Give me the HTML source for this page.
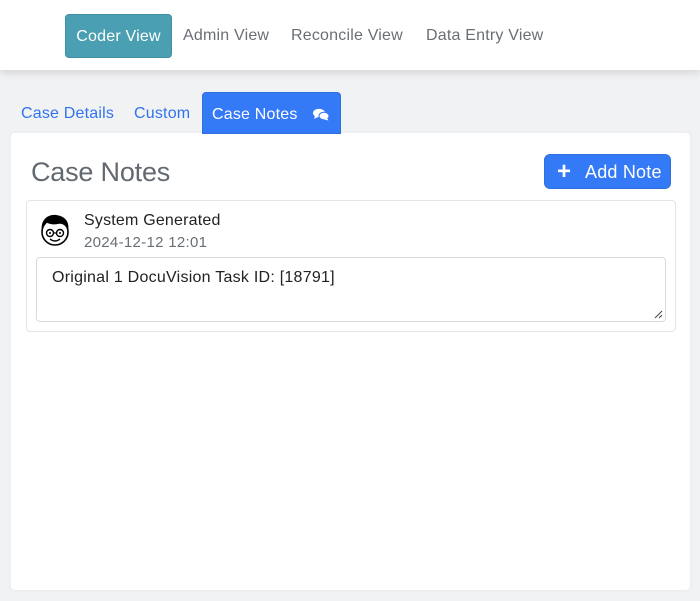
<!DOCTYPE html>
<html><head><style>
*{box-sizing:border-box;margin:0;padding:0}
body{width:700px;height:601px;background:#f1f2f4;font-family:"Liberation Sans",sans-serif;position:relative;overflow:hidden}
.nav{position:absolute;left:0;top:0;width:700px;height:70px;background:#fff;box-shadow:0 3px 8px rgba(0,0,0,.12)}
.nav a{position:absolute;top:13px;height:44px;line-height:44px;font-size:16px;color:#6a6f75;letter-spacing:.2px}
.coder{left:65px;width:107px;background:#4a9fb2;border:1px solid #3f90a3;border-radius:4px;color:#fff!important;text-align:center}
.tab{position:absolute;top:92px;height:42px;line-height:42px;font-size:16px;color:#2f74ee;letter-spacing:.2px}
.act{left:202px;width:139px;background:#3479f5;color:#fff;border-radius:4px 4px 0 0;padding-left:9px;border:1px solid #2f6fe0}
.card{position:absolute;left:11px;top:133px;width:679px;height:457px;background:#fff;border-radius:4px;box-shadow:0 0 4px rgba(0,0,0,.05)}
h1{position:absolute;left:31px;top:157px;font-size:27px;font-weight:normal;color:#636970;letter-spacing:-.2px}
.add{position:absolute;left:544px;top:154px;width:127px;height:35px;background:#3479f5;border:1px solid #2f6fe0;border-radius:6px;color:#fff;font-size:18px;line-height:34px;padding-left:40px;letter-spacing:.2px}
.add span{position:absolute;left:12px;top:0;font-size:24px;font-weight:bold}
.note{position:absolute;left:26px;top:200px;width:650px;height:132px;border:1px solid #e3e4e6;border-radius:4px}
.ta{position:absolute;left:36px;top:257px;width:630px;height:65px;border:1px solid #d9dadc;border-radius:4px;font-size:16px;color:#222;padding:11px 15px;letter-spacing:.25px}
</style></head><body>
<div class="nav">
<a class="coder" style="top:14px">Coder View</a>
<a style="left:183px;top:14px">Admin View</a>
<a style="left:291px;top:14px">Reconcile View</a>
<a style="left:426px;top:14px">Data Entry View</a>
</div>
<div class="tab" style="left:21px;top:93px">Case Details</div>
<div class="tab" style="left:134px;top:93px">Custom</div>
<div class="card"></div>
<div class="tab act"><span style="position:relative;top:1px">Case Notes</span>
<svg style="position:absolute;left:110px;top:15px" width="16" height="13" viewBox="0 0 16 13"><ellipse cx="6" cy="5" rx="6" ry="4.3" fill="#fff"/><path d="M2 8 L1 11 L5 9Z" fill="#fff"/><ellipse cx="11" cy="8" rx="5" ry="3.8" fill="#fff" stroke="#3479f5" stroke-width="1"/><path d="M14 10 L15.5 12.5 L11 11.5Z" fill="#fff"/></svg></div>
<h1>Case Notes</h1>
<div class="add"><span>+</span>Add Note</div>
<div class="note"></div>
<svg style="position:absolute;left:38px;top:212px" width="34" height="36" viewBox="0 0 34 36">
<circle cx="17" cy="20" r="13" fill="#fff" stroke="#000" stroke-width="1.6"/>
<path d="M4 19 C2 8 10 2 18 3 C27 4 32 10 30 19 C28 13 24 11 20 12 C16 13 10 12 8 10 C6 13 5 16 4 19Z" fill="#000"/>
<circle cx="12" cy="21" r="3.5" fill="#fff" stroke="#000" stroke-width="1.4"/><circle cx="22" cy="21" r="3.5" fill="#fff" stroke="#000" stroke-width="1.4"/>
<path d="M15.5 21h3" stroke="#000" stroke-width="1.2"/><circle cx="12" cy="21" r="1" /><circle cx="22" cy="21" r="1"/>
<path d="M12 27 Q17 31 22 27" fill="none" stroke="#000" stroke-width="1.4"/></svg>
<div style="position:absolute;left:84px;top:212px;font-size:16px;color:#222;letter-spacing:.2px">System Generated</div>
<div style="position:absolute;left:84px;top:234px;font-size:15px;color:#6a6f75;letter-spacing:.3px">2024-12-12 12:01</div>
<div class="ta">Original 1 DocuVision Task ID: [18791]
<svg style="position:absolute;right:2px;bottom:2px" width="9" height="9"><path d="M1 8L8 1M5 8L8 5" stroke="#444" stroke-width="1"/></svg></div>
</body></html>
